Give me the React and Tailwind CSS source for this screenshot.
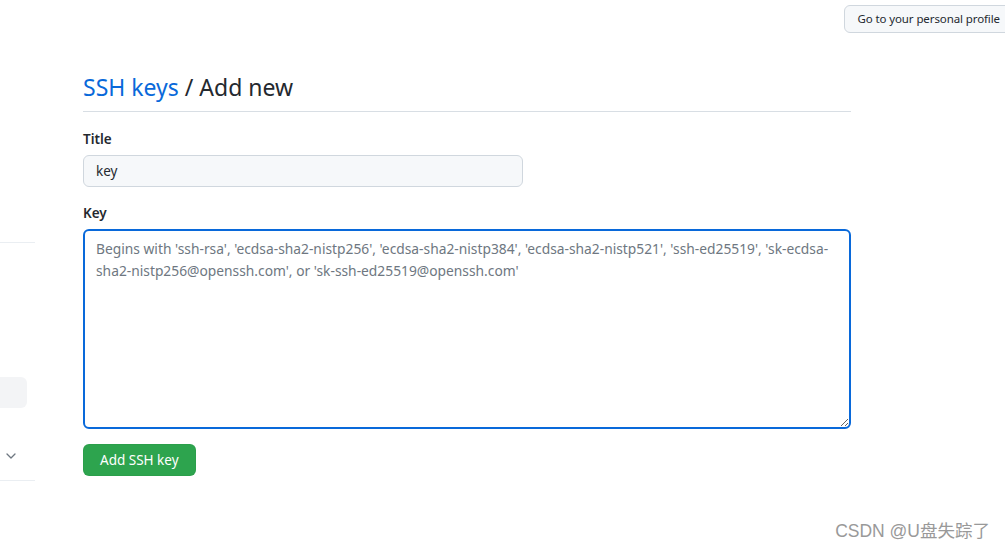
import React from 'react';

const App = () => {
  return (
    <div className="relative min-h-[550px] w-full overflow-hidden bg-white text-[#24292f] font-['Noto_Sans','Liberation_Sans',sans-serif]">
      <div className="flex h-[37px] justify-end overflow-hidden pt-[5px]">
        <button className="-mr-[8px] h-[28px] shrink-0 rounded-md border border-[#d0d7de] bg-[#f6f8fa] px-3 text-[11.5px] leading-[26px] tracking-[-0.1px] text-[#24292f]">
          Go to your personal profile
        </button>
      </div>

      <div className="flex">
        <aside className="w-[35px] shrink-0">
          <div className="mt-[205px] h-px bg-[#eaeef2]" />
          <div className="mt-[134px] h-[31px] w-[27px] rounded-r-md bg-[#f3f4f6]" />
          <div className="mt-[40px] flex h-[16px] items-center pl-[3px]">
            <svg width="16" height="16" viewBox="0 0 16 16" fill="none" stroke="#6e7781" strokeWidth="1.3" strokeLinecap="round" strokeLinejoin="round">
              <path d="M4 6l4 4 4-4" />
            </svg>
          </div>
          <div className="mt-[16px] h-px bg-[#eaeef2]" />
        </aside>

        <main className="ml-[48px] w-[768px]">
          <div className="mt-[34px] border-b border-[#d8dee4] pb-[8px]">
            <h2 className="text-[23px] font-normal leading-[32px]">
              <a className="text-[#0969da]">SSH keys</a> / Add new
            </h2>
          </div>

          <form className="mt-[17px]">
            <label className="block text-[13.5px] font-semibold leading-[20px]">Title</label>
            <input
              defaultValue="key"
              className="mt-[6px] block h-[32px] w-[440px] rounded-md border border-[#d0d7de] bg-[#f6f8fa] px-3 text-[13.5px] text-[#24292f] outline-none"
            />

            <label className="mt-[16px] block text-[13.5px] font-semibold leading-[20px]">Key</label>
            <textarea
              autoFocus
              className="mt-[6px] block h-[200px] w-full resize-y rounded-md border-2 border-[#0969da] bg-white py-[7px] pl-[11px] pr-[14px] text-[13.8px] leading-[22px] text-[#24292f] outline-none placeholder:text-[#6e7781]"
              placeholder="Begins with 'ssh-rsa', 'ecdsa-sha2-nistp256', 'ecdsa-sha2-nistp384', 'ecdsa-sha2-nistp521', 'ssh-ed25519', 'sk-ecdsa-sha2-nistp256@openssh.com', or 'sk-ssh-ed25519@openssh.com'"
            />

            <button
              type="button"
              className="mt-[15px] h-[32px] rounded-md border border-[#1f883d26] bg-[#2da44e] px-4 text-[13.5px] font-normal leading-[30px] text-white"
            >
              Add SSH key
            </button>
          </form>
        </main>
      </div>

      <div
        className="absolute bottom-[6px] right-[15px] text-[17.5px] text-[#999999]"
        style={{ fontFamily: '"Liberation Sans", "Noto Sans CJK SC", sans-serif' }}
      >
        CSDN @U盘失踪了
      </div>
    </div>
  );
};

export default App;
